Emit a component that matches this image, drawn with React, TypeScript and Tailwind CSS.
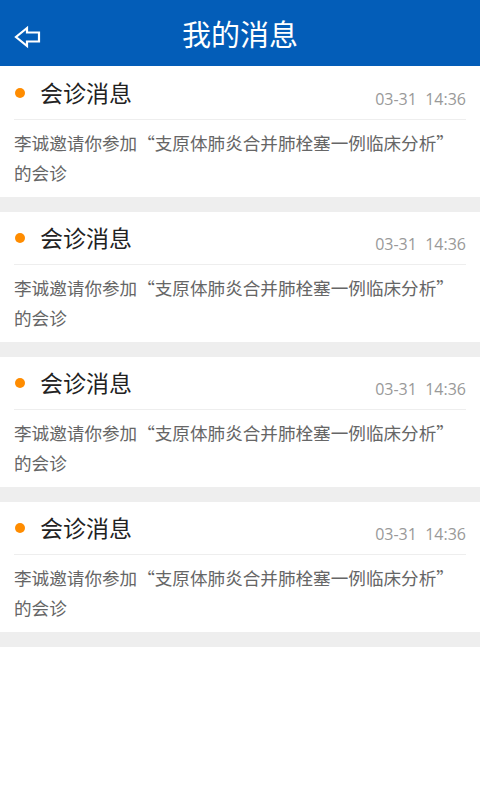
const messages = [1, 2, 3, 4].map((id) => ({
  id,
  title: "会诊消息",
  time: "03-31  14:36",
  body: "李诚邀请你参加“支原体肺炎合并肺栓塞一例临床分析”的会诊",
}));

function BackIcon() {
  return (
    <svg width="28" height="24" viewBox="0 0 28 24" fill="none">
      <path
        d="M13 3 L2 12 L13 21 L13 16.5 L25 16.5 L25 7.5 L13 7.5 Z"
        stroke="white"
        strokeWidth="2.2"
        strokeLinejoin="miter"
      />
    </svg>
  );
}

export default function App() {
  return (
    <div
      className="min-h-[800px] w-[480px] bg-white"
      style={{ fontFamily: '"Noto Sans CJK SC", "Noto Sans", sans-serif' }}
    >
      <header className="relative flex h-[66px] items-center justify-center bg-[#035db8]">
        <button className="absolute left-[14px] top-[25px]">
          <BackIcon />
        </button>
        <h1 className="text-[29px] leading-none text-white">我的消息</h1>
      </header>
      <div className="pt-px">
        {messages.map((m) => (
          <div key={m.id} className="border-b-[15px] border-[#eeeeee]">
            <div className="px-[14px]">
              <div className="flex h-[53px] items-center border-b border-[#eeeeee]">
                <span className="ml-[1px] h-[10px] w-[10px] rounded-full bg-[#ff8c00]" />
                <span className="ml-[15px] -mt-[1px] text-[23px] leading-none text-[#222]">
                  {m.title}
                </span>
                <span
                  className="ml-auto mt-[12px] whitespace-pre text-[16px] text-[#999]"
                  style={{ fontFamily: '"Open Sans", "Noto Sans", sans-serif' }}
                >
                  {m.time}
                </span>
              </div>
              <p className="pt-[8px] pb-[9px] text-[17.6px] leading-[30px] text-[#666] [line-break:anywhere]">
                {m.body}
              </p>
            </div>
          </div>
        ))}
      </div>
    </div>
  );
}
